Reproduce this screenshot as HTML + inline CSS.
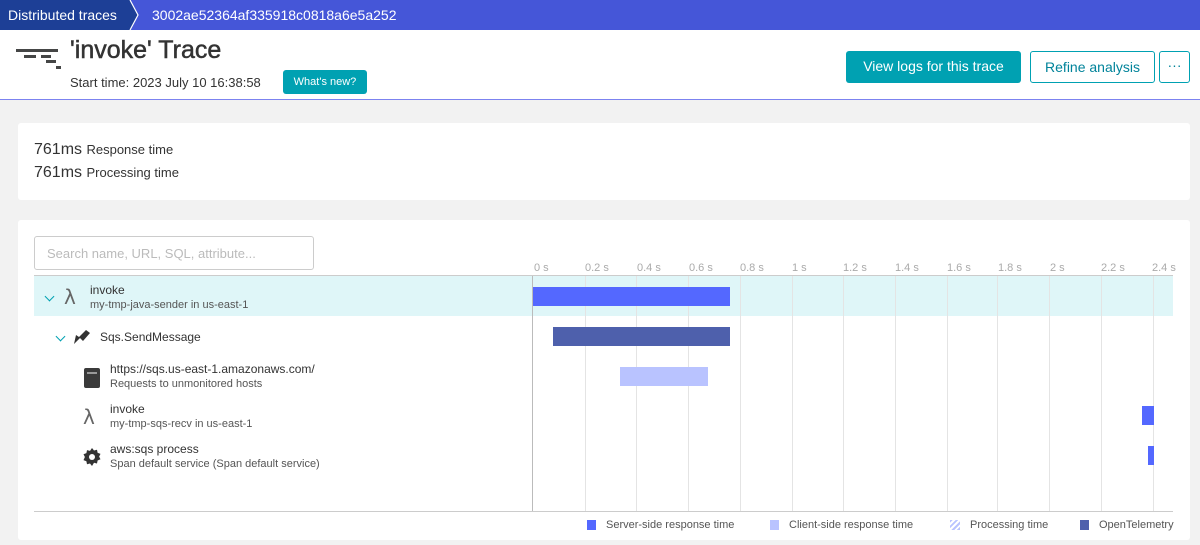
<!DOCTYPE html>
<html><head><meta charset="utf-8"><style>
*{box-sizing:border-box;margin:0;padding:0}
body{width:1200px;height:545px;overflow:hidden;background:#f2f2f2;font-family:"Liberation Sans",sans-serif;color:#454646;position:relative}
.a{position:absolute}
.top{left:0;top:0;width:1200px;height:30px;background:#4556d8}
.bc1{left:0;top:0;height:30px;width:140px;background:#1d3f96;clip-path:polygon(0 0,130px 0,138px 15px,130px 30px,0 30px)}
.hdr{left:0;top:30px;width:1200px;height:70px;background:#fff;border-bottom:1px solid #7c83f0}
.card{background:#fff;border-radius:3px}
.btn{border-radius:3px;font-size:14px;text-align:center;line-height:30px}
.grid{top:276px;width:1px;height:235px;background:#e4e4e4}
.tick{top:262px;font-size:11px;color:#aaa}
.bar{height:19px}
.t1{font-size:12px;color:#333}
.t2{font-size:11px;color:#555}
.chev{width:7px;height:7px;border-right:1.5px solid #00a1b2;border-bottom:1.5px solid #00a1b2;transform:rotate(45deg)}
.lam{font-size:20px;color:#666;font-family:"DejaVu Sans",sans-serif}
</style></head><body>
<div class="a top"></div>
<div class="a bc1"></div>
<svg class="a" style="left:128px;top:0" width="14" height="30"><polyline points="2,0 10,15 2,30" fill="none" stroke="#fff" stroke-width="1.2"/></svg>
<div class="a" style="left:8px;top:7px;color:#fff;font-size:14px">Distributed traces</div>
<div class="a" style="left:152px;top:7px;color:#fff;font-size:14px">3002ae52364af335918c0818a6e5a252</div>
<div class="a hdr"></div>
<svg class="a" style="left:16px;top:44px" width="46" height="26"><rect x="0" y="5" width="42" height="3" fill="#454646"/><rect x="8" y="11" width="12" height="3" fill="#454646"/><rect x="25" y="11" width="10" height="3" fill="#454646"/><rect x="30" y="16" width="10" height="3" fill="#454646"/><rect x="40" y="22" width="5" height="3" fill="#454646"/></svg>
<div class="a" style="left:70px;top:36px;font-size:25px;color:#333;-webkit-text-stroke:0.5px #333">'invoke' Trace</div>
<div class="a" style="left:70px;top:75px;font-size:13px;color:#333">Start time: 2023 July 10 16:38:58</div>
<div class="a btn" style="left:283px;top:70px;width:84px;height:24px;background:#00a1b2;color:#fff;font-size:11px;line-height:24px">What's new?</div>
<div class="a btn" style="left:846px;top:51px;width:175px;height:32px;background:#00a1b2;color:#fff">View logs for this trace</div>
<div class="a btn" style="left:1030px;top:51px;width:125px;height:32px;border:1px solid #00a1b2;color:#00839a;background:#fff">Refine analysis</div>
<div class="a btn" style="left:1159px;top:51px;width:31px;height:32px;border:1px solid #00a1b2;color:#00839a;background:#fff;line-height:26px">···</div>

<div class="a card" style="left:18px;top:123px;width:1172px;height:77px"></div>
<div class="a" style="left:34px;top:141px;font-size:16px;color:#333">761ms <span style="font-size:13px">Response time</span></div>
<div class="a" style="left:34px;top:164px;font-size:16px;color:#333">761ms <span style="font-size:13px">Processing time</span></div>

<div class="a card" style="left:18px;top:220px;width:1172px;height:320px"></div>
<div class="a" style="left:34px;top:236px;width:280px;height:34px;border:1px solid #ccc;border-radius:3px;font-size:13px;color:#bbb;padding:9px 12px">Search name, URL, SQL, attribute...</div>
<div class="a" style="left:34px;top:276px;width:1139px;height:40px;background:#dff6f8"></div>
<div class="a" style="left:34px;top:275px;width:1139px;height:1px;background:#ccc"></div>
<div class="a" style="left:34px;top:511px;width:1139px;height:1px;background:#ccc"></div>

<div class="a grid" style="left:532px;background:#bbb"></div>
<div class="a grid" style="left:585px"></div><div class="a grid" style="left:636px"></div><div class="a grid" style="left:688px"></div><div class="a grid" style="left:740px"></div><div class="a grid" style="left:792px"></div><div class="a grid" style="left:843px"></div><div class="a grid" style="left:895px"></div><div class="a grid" style="left:947px"></div><div class="a grid" style="left:997px"></div><div class="a grid" style="left:1049px"></div><div class="a grid" style="left:1101px"></div><div class="a grid" style="left:1153px"></div>
<div class="a tick" style="left:534px">0 s</div><div class="a tick" style="left:585px">0.2 s</div><div class="a tick" style="left:637px">0.4 s</div><div class="a tick" style="left:689px">0.6 s</div><div class="a tick" style="left:740px">0.8 s</div><div class="a tick" style="left:792px">1 s</div><div class="a tick" style="left:843px">1.2 s</div><div class="a tick" style="left:895px">1.4 s</div><div class="a tick" style="left:947px">1.6 s</div><div class="a tick" style="left:998px">1.8 s</div><div class="a tick" style="left:1050px">2 s</div><div class="a tick" style="left:1101px">2.2 s</div><div class="a tick" style="left:1152px">2.4 s</div>

<div class="a bar" style="left:533px;top:287px;width:197px;background:#5468ff"></div>
<div class="a bar" style="left:553px;top:327px;width:177px;background:#4e60ac"></div>
<div class="a bar" style="left:620px;top:367px;width:88px;background:#b9c3ff"></div>
<div class="a bar" style="left:1142px;top:406px;width:12px;background:#5468ff"></div>
<div class="a bar" style="left:1148px;top:446px;width:6px;background:#5468ff"></div>

<div class="a chev" style="left:46px;top:293px"></div>
<div class="a lam" style="left:64px;top:285px">λ</div>
<div class="a t1" style="left:90px;top:283px">invoke</div>
<div class="a t2" style="left:90px;top:299px">my-tmp-java-sender in us-east-1</div>

<div class="a chev" style="left:57px;top:333px"></div>
<svg class="a" style="left:72px;top:328px" width="20" height="18"><path d="M2 16 L8 10 L11 13 L18 5 L14 2 L7 9 L4 7 Z" fill="#333"/></svg>
<div class="a t1" style="left:100px;top:330px">Sqs.SendMessage</div>

<div class="a" style="left:84px;top:368px;width:16px;height:20px;background:#3a3a3a;border-radius:2px"></div>
<div class="a" style="left:87px;top:372px;width:10px;height:2px;background:#999"></div>
<div class="a t1" style="left:110px;top:362px">https://sqs.us-east-1.amazonaws.com/</div>
<div class="a t2" style="left:110px;top:378px">Requests to unmonitored hosts</div>

<div class="a lam" style="left:83px;top:405px">λ</div>
<div class="a t1" style="left:110px;top:402px">invoke</div>
<div class="a t2" style="left:110px;top:418px">my-tmp-sqs-recv in us-east-1</div>

<svg class="a" style="left:82px;top:447px" width="20" height="20" viewBox="0 0 20 20"><path d="M10 1l2 2.5 3-.8.6 3 2.9 1.2-1.4 2.7 1.4 2.7-2.9 1.2-.6 3-3-.8L10 19l-2-2.5-3 .8-.6-3-2.9-1.2L2.9 10 1.5 7.3l2.9-1.2.6-3 3 .8z" fill="#333"/><circle cx="10" cy="10" r="3" fill="#fff"/></svg>
<div class="a t1" style="left:110px;top:442px">aws:sqs process</div>
<div class="a t2" style="left:110px;top:458px">Span default service (Span default service)</div>

<div class="a" style="left:587px;top:520px;width:9px;height:10px;background:#5468ff"></div>
<div class="a t2" style="left:606px;top:519px">Server-side response time</div>
<div class="a" style="left:770px;top:520px;width:9px;height:10px;background:#b9c3ff"></div>
<div class="a t2" style="left:789px;top:519px">Client-side response time</div>
<div class="a" style="left:950px;top:520px;width:10px;height:10px;background:repeating-linear-gradient(135deg,#b9c3ff 0 2px,#fff 2px 4px)"></div>
<div class="a t2" style="left:970px;top:519px">Processing time</div>
<div class="a" style="left:1080px;top:520px;width:9px;height:10px;background:#4e60ac"></div>
<div class="a t2" style="left:1099px;top:519px">OpenTelemetry</div>
</body></html>
